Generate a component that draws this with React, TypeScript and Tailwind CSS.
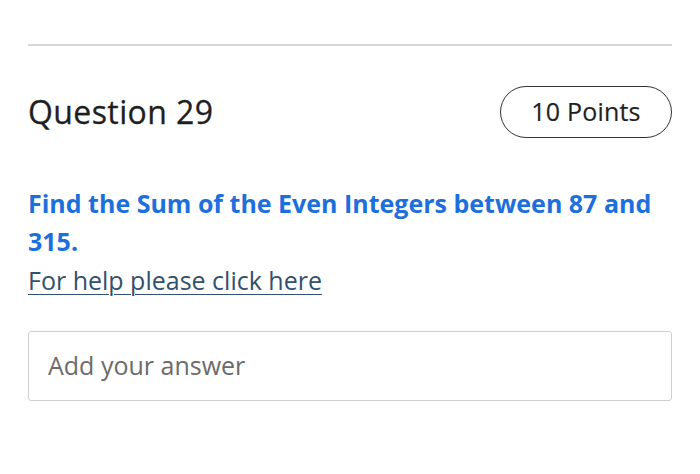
export default function App() {
  return (
    <div
      className="w-[700px] h-[474px] bg-white px-[28px] pt-[44px]"
      style={{ fontFamily: '"Open Sans", "Noto Sans", sans-serif' }}
    >
      <div className="h-[2px] bg-[#d6d6d6]" />

      <div className="flex items-center justify-between mt-[40px]">
        <h2 className="text-[32px] leading-none text-[#1f1f1f] tracking-[0.4px] [-webkit-text-stroke:0.3px_#1f1f1f]">
          Question 29
        </h2>
        <div className="h-[52px] w-[172px] rounded-full border-[1.5px] border-[#333] flex items-center justify-center text-[25px] text-[#1f1f1f] tracking-[0.2px] [-webkit-text-stroke:0.2px_#1f1f1f]">
          10 Points
        </div>
      </div>

      <div className="mt-[46px]">
        <p className="text-[25px] font-bold leading-[38px] text-[#1c6fdc]">
          Find the Sum of the Even Integers between 87 and 315.
        </p>
        <p className="text-[25px] leading-[40px]">
          <a href="#" className="underline text-[#33506d] underline-offset-[4px] decoration-[1px]">
            For help please click here
          </a>
        </p>
      </div>

      <div className="mt-[31px] h-[70px] border border-[#cfcfcf] rounded-[3px] flex items-center px-[19px]">
        <span className="text-[25px] text-[#6b6b6b]">Add your answer</span>
      </div>
    </div>
  );
}
